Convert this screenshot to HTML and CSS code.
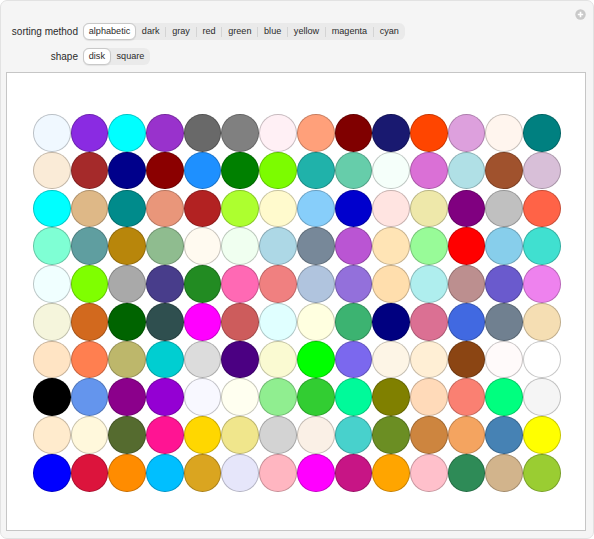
FILE: index.html
```html
<!DOCTYPE html>
<html>
<head>
<meta charset="utf-8">
<link rel="stylesheet" href="styles.css">
</head>
<body>
<div class="panel">
  <div class="add-btn"><svg width="11" height="11" viewBox="0 0 11 11"><circle cx="5.5" cy="5.5" r="5.2" fill="#c9c9c9"/><path d="M5.5 2.8v5.4M2.8 5.5h5.4" stroke="#fff" stroke-width="1.6"/></svg></div>
  <div class="controls">
    <div class="label">sorting method</div>
    <div class="setter">
      <span class="seg on">alphabetic</span>
      <span class="seg">dark</span><span class="sep"></span>
      <span class="seg">gray</span><span class="sep"></span>
      <span class="seg">red</span><span class="sep"></span>
      <span class="seg">green</span><span class="sep"></span>
      <span class="seg">blue</span><span class="sep"></span>
      <span class="seg">yellow</span><span class="sep"></span>
      <span class="seg">magenta</span><span class="sep"></span>
      <span class="seg">cyan</span>
    </div>
    <div class="label">shape</div>
    <div class="setter">
      <span class="seg on">disk</span>
      <span class="seg">square</span>
    </div>
  </div>
  <div class="graphic">
    <div class="grid">
      <div class="dot" style="background:#F0F8FF"></div><div class="dot" style="background:#FAEBD7"></div><div class="dot" style="background:#00FFFF"></div><div class="dot" style="background:#7FFFD4"></div><div class="dot" style="background:#F0FFFF"></div><div class="dot" style="background:#F5F5DC"></div><div class="dot" style="background:#FFE4C4"></div><div class="dot" style="background:#000000"></div><div class="dot" style="background:#FFEBCD"></div><div class="dot" style="background:#0000FF"></div>
      <div class="dot" style="background:#8A2BE2"></div><div class="dot" style="background:#A52A2A"></div><div class="dot" style="background:#DEB887"></div><div class="dot" style="background:#5F9EA0"></div><div class="dot" style="background:#7FFF00"></div><div class="dot" style="background:#D2691E"></div><div class="dot" style="background:#FF7F50"></div><div class="dot" style="background:#6495ED"></div><div class="dot" style="background:#FFF8DC"></div><div class="dot" style="background:#DC143C"></div>
      <div class="dot" style="background:#00FFFF"></div><div class="dot" style="background:#00008B"></div><div class="dot" style="background:#008B8B"></div><div class="dot" style="background:#B8860B"></div><div class="dot" style="background:#A9A9A9"></div><div class="dot" style="background:#006400"></div><div class="dot" style="background:#BDB76B"></div><div class="dot" style="background:#8B008B"></div><div class="dot" style="background:#556B2F"></div><div class="dot" style="background:#FF8C00"></div>
      <div class="dot" style="background:#9932CC"></div><div class="dot" style="background:#8B0000"></div><div class="dot" style="background:#E9967A"></div><div class="dot" style="background:#8FBC8F"></div><div class="dot" style="background:#483D8B"></div><div class="dot" style="background:#2F4F4F"></div><div class="dot" style="background:#00CED1"></div><div class="dot" style="background:#9400D3"></div><div class="dot" style="background:#FF1493"></div><div class="dot" style="background:#00BFFF"></div>
      <div class="dot" style="background:#696969"></div><div class="dot" style="background:#1E90FF"></div><div class="dot" style="background:#B22222"></div><div class="dot" style="background:#FFFAF0"></div><div class="dot" style="background:#228B22"></div><div class="dot" style="background:#FF00FF"></div><div class="dot" style="background:#DCDCDC"></div><div class="dot" style="background:#F8F8FF"></div><div class="dot" style="background:#FFD700"></div><div class="dot" style="background:#DAA520"></div>
      <div class="dot" style="background:#808080"></div><div class="dot" style="background:#008000"></div><div class="dot" style="background:#ADFF2F"></div><div class="dot" style="background:#F0FFF0"></div><div class="dot" style="background:#FF69B4"></div><div class="dot" style="background:#CD5C5C"></div><div class="dot" style="background:#4B0082"></div><div class="dot" style="background:#FFFFF0"></div><div class="dot" style="background:#F0E68C"></div><div class="dot" style="background:#E6E6FA"></div>
      <div class="dot" style="background:#FFF0F5"></div><div class="dot" style="background:#7CFC00"></div><div class="dot" style="background:#FFFACD"></div><div class="dot" style="background:#ADD8E6"></div><div class="dot" style="background:#F08080"></div><div class="dot" style="background:#E0FFFF"></div><div class="dot" style="background:#FAFAD2"></div><div class="dot" style="background:#90EE90"></div><div class="dot" style="background:#D3D3D3"></div><div class="dot" style="background:#FFB6C1"></div>
      <div class="dot" style="background:#FFA07A"></div><div class="dot" style="background:#20B2AA"></div><div class="dot" style="background:#87CEFA"></div><div class="dot" style="background:#778899"></div><div class="dot" style="background:#B0C4DE"></div><div class="dot" style="background:#FFFFE0"></div><div class="dot" style="background:#00FF00"></div><div class="dot" style="background:#32CD32"></div><div class="dot" style="background:#FAF0E6"></div><div class="dot" style="background:#FF00FF"></div>
      <div class="dot" style="background:#800000"></div><div class="dot" style="background:#66CDAA"></div><div class="dot" style="background:#0000CD"></div><div class="dot" style="background:#BA55D3"></div><div class="dot" style="background:#9370DB"></div><div class="dot" style="background:#3CB371"></div><div class="dot" style="background:#7B68EE"></div><div class="dot" style="background:#00FA9A"></div><div class="dot" style="background:#48D1CC"></div><div class="dot" style="background:#C71585"></div>
      <div class="dot" style="background:#191970"></div><div class="dot" style="background:#F5FFFA"></div><div class="dot" style="background:#FFE4E1"></div><div class="dot" style="background:#FFE4B5"></div><div class="dot" style="background:#FFDEAD"></div><div class="dot" style="background:#000080"></div><div class="dot" style="background:#FDF5E6"></div><div class="dot" style="background:#808000"></div><div class="dot" style="background:#6B8E23"></div><div class="dot" style="background:#FFA500"></div>
      <div class="dot" style="background:#FF4500"></div><div class="dot" style="background:#DA70D6"></div><div class="dot" style="background:#EEE8AA"></div><div class="dot" style="background:#98FB98"></div><div class="dot" style="background:#AFEEEE"></div><div class="dot" style="background:#DB7093"></div><div class="dot" style="background:#FFEFD5"></div><div class="dot" style="background:#FFDAB9"></div><div class="dot" style="background:#CD853F"></div><div class="dot" style="background:#FFC0CB"></div>
      <div class="dot" style="background:#DDA0DD"></div><div class="dot" style="background:#B0E0E6"></div><div class="dot" style="background:#800080"></div><div class="dot" style="background:#FF0000"></div><div class="dot" style="background:#BC8F8F"></div><div class="dot" style="background:#4169E1"></div><div class="dot" style="background:#8B4513"></div><div class="dot" style="background:#FA8072"></div><div class="dot" style="background:#F4A460"></div><div class="dot" style="background:#2E8B57"></div>
      <div class="dot" style="background:#FFF5EE"></div><div class="dot" style="background:#A0522D"></div><div class="dot" style="background:#C0C0C0"></div><div class="dot" style="background:#87CEEB"></div><div class="dot" style="background:#6A5ACD"></div><div class="dot" style="background:#708090"></div><div class="dot" style="background:#FFFAFA"></div><div class="dot" style="background:#00FF7F"></div><div class="dot" style="background:#4682B4"></div><div class="dot" style="background:#D2B48C"></div>
      <div class="dot" style="background:#008080"></div><div class="dot" style="background:#D8BFD8"></div><div class="dot" style="background:#FF6347"></div><div class="dot" style="background:#40E0D0"></div><div class="dot" style="background:#EE82EE"></div><div class="dot" style="background:#F5DEB3"></div><div class="dot" style="background:#FFFFFF"></div><div class="dot" style="background:#F5F5F5"></div><div class="dot" style="background:#FFFF00"></div><div class="dot" style="background:#9ACD32"></div>
    </div>
  </div>
</div>
</body>
</html>
```
FILE: styles.css
```css
html, body {
  margin: 0;
  padding: 0;
  background: #ffffff;
}
body {
  font-family: "Liberation Sans", Arial, sans-serif;
  color: #2b2b2b;
}
.panel {
  position: relative;
  box-sizing: border-box;
  width: 594px;
  height: 539px;
  background: #f5f5f5;
  border: 1px solid #e2e2e2;
  border-radius: 7px;
  padding: 22px 0 0 5px;
}
.add-btn {
  position: absolute;
  top: 8px;
  right: 7px;
  width: 11px;
  height: 11px;
}
.add-btn svg { display: block; }
.controls {
  display: grid;
  grid-template-columns: 72px auto;
  column-gap: 5px;
  row-gap: 8px;
  align-items: center;
  justify-items: start;
}
.label {
  justify-self: end;
  font-size: 10px;
  line-height: 17px;
  color: #2b2b2b;
}
.setter {
  display: inline-flex;
  align-items: center;
  height: 17px;
  background: #eaeaea;
  border-radius: 6px;
}
.seg {
  box-sizing: border-box;
  height: 17px;
  line-height: 17px;
  padding: 0 5.8px;
  font-size: 9.1px;
  color: #2b2b2b;
  white-space: nowrap;
}
.seg.on {
  background: #ffffff;
  border: 1px solid #c9c9c9;
  border-radius: 6px;
  line-height: 15px;
  padding: 0 4.8px;
  box-shadow: 0 0.5px 1px rgba(0,0,0,0.08);
}
.sep {
  width: 1px;
  height: 10px;
  background: #d4d4d4;
}
.graphic {
  box-sizing: border-box;
  margin-top: 7px;
  width: 580px;
  height: 459px;
  background: #ffffff;
  border: 1px solid #c6c6c6;
  padding: 41px 0 0 26px;
}
.grid {
  display: grid;
  grid-template-columns: repeat(14, 37.7px);
  grid-template-rows: repeat(10, 37.77px);
  grid-auto-flow: column;
}
.dot {
  box-sizing: border-box;
  width: 37.7px;
  height: 37.7px;
  border-radius: 50%;
  border: 0.8px solid rgba(0,0,0,0.22);
}
```
